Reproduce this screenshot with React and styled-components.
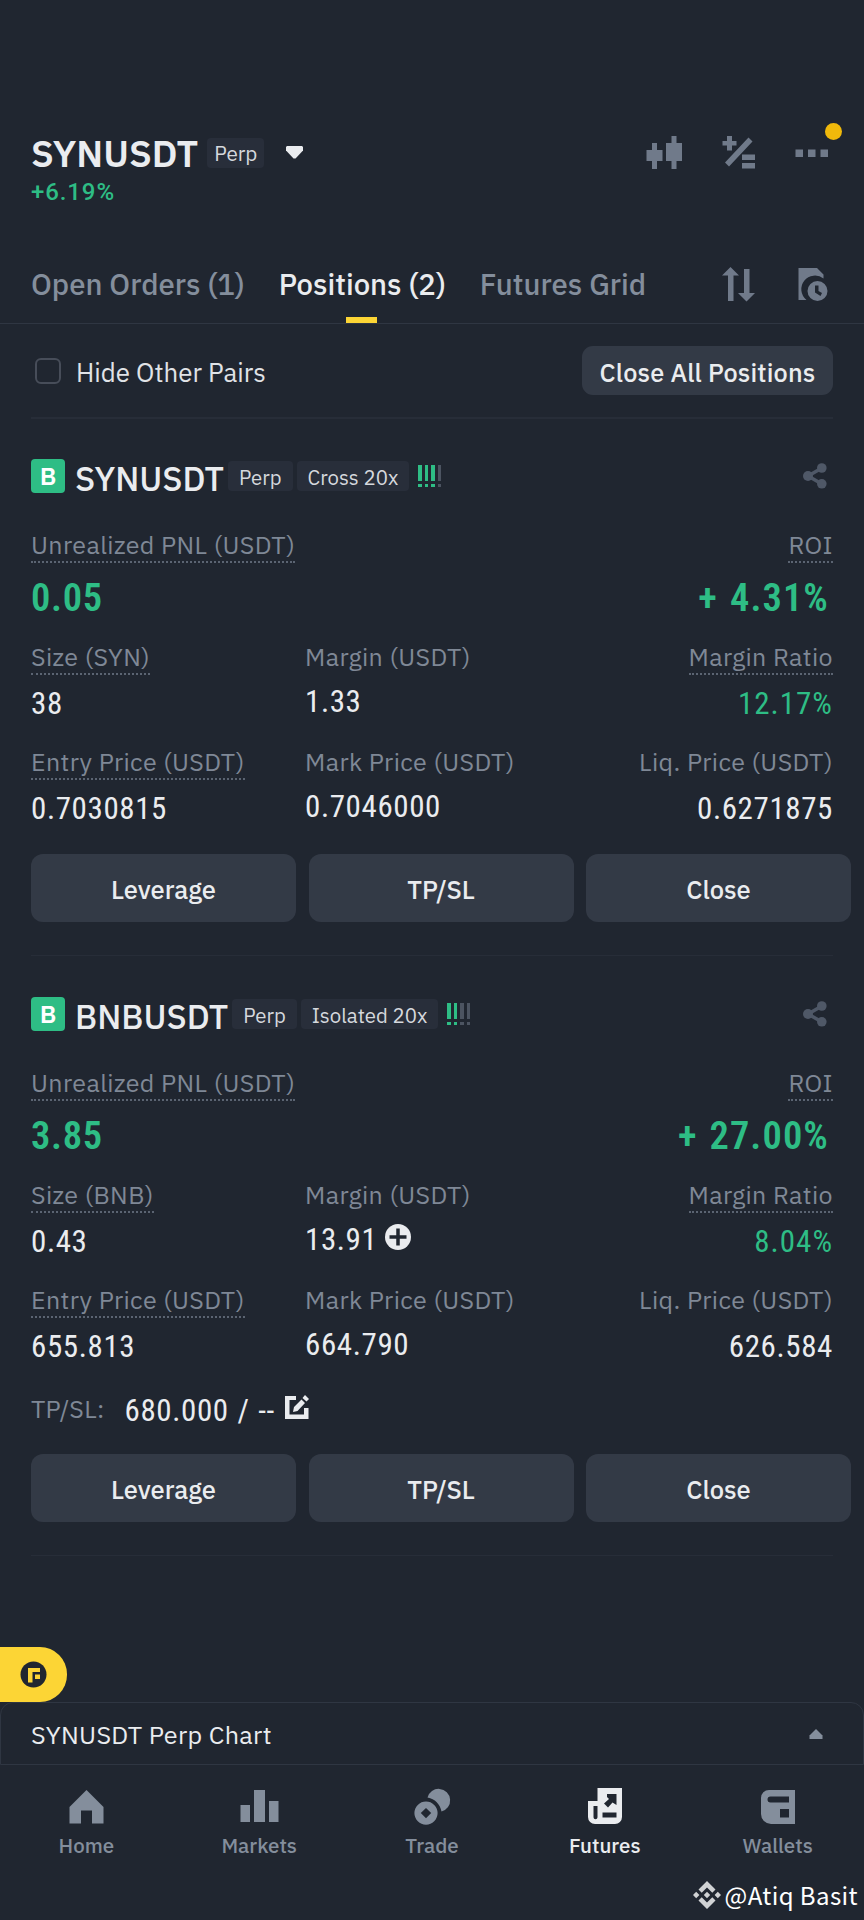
import React from 'react';
import styled, { createGlobalStyle } from 'styled-components';

const positions = [
    {
        symbol: 'SYNUSDT',
        coin: 'SYN',
        mode: 'Cross 20x',
        risk: 3,
        pnl: '0.05',
        roi: '+ 4.31%',
        size: '38',
        margin: '1.33',
        ratio: '12.17%',
        entry: '0.7030815',
        mark: '0.7046000',
        liq: '0.6271875',
    },
    {
        symbol: 'BNBUSDT',
        coin: 'BNB',
        mode: 'Isolated 20x',
        risk: 2,
        pnl: '3.85',
        roi: '+ 27.00%',
        size: '0.43',
        margin: '13.91',
        canAdd: true,
        ratio: '8.04%',
        entry: '655.813',
        mark: '664.790',
        liq: '626.584',
        tpsl: '680.000 / --',
    },
];

const App = () => {
    return (
        <Screen>
            <GlobalStyle />
            <Header>
                <div>
                    <PairRow>
                        <PairName>SYNUSDT</PairName>
                        <HeaderTag>Perp</HeaderTag>
                        <Caret width="17" height="13" viewBox="0 0 17 13">
                            <path d="M1 0h15l1 1v3.500L9.500 12.500h-2L0 4.500V1z" />
                        </Caret>
                    </PairRow>
                    <Change>+6.19%</Change>
                </div>
                <HeaderIcons>
                    <svg width="37" height="33" viewBox="0 0 37 33">
                        <path d="M6 7h5v7h5.500v11H11v8H6v-8H.5V14H6zM25.500 0h5v7H36v18h-5.500v8h-5v-8H20V7h5.500z" />
                    </svg>
                    <svg width="33" height="33" viewBox="0 0 33 33">
                        <path d="M5 0h5v5h4.500v4.500H10v5H5v-5H.5V5H5zM26.500 1.500l4 4L7 30.500l-4-4zM20 18.500h13V24H20zM20 27h13v5.500H20z" />
                    </svg>
                    <MoreIcon>
                        <svg width="33" height="8" viewBox="0 0 33 8">
                            <path d="M.5.5h7.500V8H.5zM13 .5h7.500V8H13zM25.500.5H33V8h-7.500z" />
                        </svg>
                        <Dot />
                    </MoreIcon>
                </HeaderIcons>
            </Header>

            <Tabs>
                <Tab>Open Orders (1)</Tab>
                <Tab $active>Positions (2)</Tab>
                <Tab>Futures Grid</Tab>
                <TabIcons>
                    <svg width="33" height="35" viewBox="0 0 33 35">
                        <path d="M8.500 0L17 8.500h-5.500V34H6V8.500H0zM22 2h5.500v24H33L24.500 34.500 16 26h6z" />
                    </svg>
                    <svg width="30" height="34" viewBox="0 0 30 34">
                        <path d="M.5 1h18.500l6.500 6.500V11.500A12.500 12.500 0 0 0 8.500 33H.5z" />
                        <path
                            fillRule="evenodd"
                            d="M19.500 14a10 10 0 1 0 0 20 10 10 0 0 0 0-20zm-2.500 4.500h3.500v5.500l3.500 2-1.500 3-5.500-3.500z"
                        />
                    </svg>
                </TabIcons>
            </Tabs>

            <FilterRow>
                <Checkbox />
                <FilterLabel>Hide Other Pairs</FilterLabel>
                <CloseAll>Close All Positions</CloseAll>
            </FilterRow>

            {positions.map((p) => (
                <Position key={p.symbol} data={p} />
            ))}

            <BottomArea>
                <Bonus>
                    <svg width="27" height="27" viewBox="0 0 27 27">
                        <circle cx="13.500" cy="13.500" r="13" fill="#202630" />
                        <path d="M8 7h12v4h-7.500v10.500H8zM15 13.500h5v4.500h-5z" fill="#fcd535" />
                    </svg>
                </Bonus>
                <ChartBar>
                    <span>SYNUSDT Perp Chart</span>
                    <svg width="14" height="10" viewBox="0 0 14 10">
                        <path d="M7 0l6.500 6.500V10H.5V6.500z" />
                    </svg>
                </ChartBar>
                <Nav />
                <Watermark>
                    <svg width="28" height="28" viewBox="0 0 28 28">
                        <path d="M14 0l8.500 8.500-3.200 3.200L14 6.400l-5.300 5.300-3.200-3.200zM14 28l8.500-8.500-3.200-3.200-5.300 5.300-5.300-5.300-3.200 3.200zM3.200 10.800L6.400 14l-3.200 3.200L0 14zM24.800 10.800L28 14l-3.200 3.200-3.200-3.200zM14 10.800l3.200 3.200-3.200 3.200-3.200-3.200z" />
                    </svg>
                    <span>@Atiq Basit</span>
                </Watermark>
            </BottomArea>
        </Screen>
    );
};

export default App;

const Position = ({ data }) => {
    return (
        <Card>
            <CardHead>
                <Side>B</Side>
                <Symbol>{data.symbol}</Symbol>
                <Tag>Perp</Tag>
                <Tag>{data.mode}</Tag>
                <Risk>
                    {[0, 1, 2, 3].map((i) => (
                        <RiskBar key={i} $on={i < data.risk} />
                    ))}
                </Risk>
                <ShareIcon width="24" height="26" viewBox="0 0 24 26">
                    <path d="M19 5L5 13l14 8" fill="none" strokeWidth="3.500" />
                    <circle cx="18.800" cy="5" r="4.800" />
                    <circle cx="5" cy="13" r="5" />
                    <circle cx="18.800" cy="20.800" r="4.800" />
                </ShareIcon>
            </CardHead>

            <Between>
                <Stat>
                    <Label $dotted>Unrealized PNL (USDT)</Label>
                    <BigValue>{data.pnl}</BigValue>
                </Stat>
                <Stat $right>
                    <Label $dotted>ROI</Label>
                    <BigValue $inset>{data.roi}</BigValue>
                </Stat>
            </Between>

            <Stats>
                <Stat>
                    <Label $dotted>Size ({data.coin})</Label>
                    <Value>{data.size}</Value>
                </Stat>
                <Stat>
                    <Label>Margin (USDT)</Label>
                    <Value $plain>
                        <span>{data.margin}</span>
                        {data.canAdd && (
                            <AddIcon width="26" height="26" viewBox="0 0 26 26">
                                <circle cx="13" cy="13" r="13" fill="#eaecef" />
                                <path d="M13 4.500v17M4.500 13h17" stroke="#202630" strokeWidth="3.500" />
                            </AddIcon>
                        )}
                    </Value>
                </Stat>
                <Stat $right>
                    <Label $dotted>Margin Ratio</Label>
                    <Value $up>{data.ratio}</Value>
                </Stat>
                <Stat>
                    <Label $dotted>Entry Price (USDT)</Label>
                    <Value>{data.entry}</Value>
                </Stat>
                <Stat>
                    <Label>Mark Price (USDT)</Label>
                    <Value $plain>{data.mark}</Value>
                </Stat>
                <Stat $right>
                    <Label>Liq. Price (USDT)</Label>
                    <Value>{data.liq}</Value>
                </Stat>
            </Stats>

            {data.tpsl && (
                <TpslRow>
                    <TpslLabel>TP/SL:</TpslLabel>
                    <TpslValue>{data.tpsl}</TpslValue>
                    <EditIcon width="24" height="24" viewBox="0 0 24 24">
                        <path d="M0 1h11v4H4.500v14.500H19V13h4.500v11H0z" />
                        <path d="M16.500 4.500l3.500 3.500-7.500 8L8 17l1-5zM20 0l4 4-2.500 2.500L17.500 3z" />
                    </EditIcon>
                </TpslRow>
            )}

            <Actions $tight={!!data.tpsl}>
                <Action>Leverage</Action>
                <Action>TP/SL</Action>
                <Action>Close</Action>
            </Actions>
        </Card>
    );
};

const Nav = () => {
    return (
        <NavBar>
            <NavItem>
                <svg width="36" height="36" viewBox="0 0 36 36">
                    <path d="M18.500 1l17 17v16.500H24V21.500H13v13H1.500V18z" />
                </svg>
                <span>Home</span>
            </NavItem>
            <NavItem>
                <svg width="38" height="36" viewBox="0 0 38 36">
                    <path d="M.5 16H10v17H.5zM14 1h11v32H14zM29 12h9.500v21H29z" />
                </svg>
                <span>Markets</span>
            </NavItem>
            <NavItem>
                <svg width="38" height="36" viewBox="0 0 38 36">
                    <path d="M14.500 8.500A11.500 11.500 0 1 1 28.500 22.500C27 15 22 10 14.500 8.500z" />
                    <path
                        fillRule="evenodd"
                        d="M13 12.500a11.600 11.600 0 1 0 0 23.200 11.600 11.600 0 0 0 0-23.200zm0 6.400l5.200 5.200-5.200 5.200-5.200-5.200z"
                    />
                </svg>
                <span>Trade</span>
            </NavItem>
            <NavItem $active>
                <svg width="36" height="36" viewBox="0 0 36 36">
                    <path
                        fillRule="evenodd"
                        d="M10.500-1H35v29a7 7 0 0 1-7 7H8a7 7 0 0 1-7-7V12h9.500zM6.500 17v11c0 3 4 3 4 0V17zM20 5v3l2 2-5 4.500 4 4 4.500-5 4 2.500V5zM15.500 23.500v5h14v-5z"
                    />
                </svg>
                <span>Futures</span>
            </NavItem>
            <NavItem>
                <svg width="36" height="36" viewBox="0 0 36 36">
                    <path
                        fillRule="evenodd"
                        d="M9 1h26v34H11A10 10 0 0 1 1 25V9a8 8 0 0 1 8-8zm1.500 6.500a3 3 0 0 0 0 6H29v-6zM20 20v8.500h9V20z"
                    />
                </svg>
                <span>Wallets</span>
            </NavItem>
        </NavBar>
    );
};

const textFont = `'IBM Plex Sans', Roboto, 'Noto Sans', sans-serif`;
const numFont = `Roboto, 'Liberation Sans', sans-serif`;

const GlobalStyle = createGlobalStyle`
* {
    box-sizing: border-box;
}

body {
    margin: 0;
    background: #202630;
    color: #eaecef;
    font-family: ${textFont};
}

svg {
    display: block;
    flex-shrink: 0;
    overflow: visible;
}

button {
    border: none;
    padding: 0;
    color: inherit;
    font-family: inherit;
}
`;

const Screen = styled.div`
width: 864px;
height: 1920px;
padding-top: 128px;
display: flex;
flex-direction: column;
overflow: hidden;
`;

const Header = styled.header`
height: 117px;
flex-shrink: 0;
padding: 0 31px;
display: flex;
justify-content: space-between;
`;

const PairRow = styled.div`
height: 50px;
display: flex;
align-items: center;
`;

const PairName = styled.span`
font-size: 37.4px;
font-weight: 600;
line-height: 49px;
`;

const HeaderTag = styled.span`
height: 30px;
margin-left: 9px;
padding: 0 7px;
border-radius: 4px;
background: #282e3a;
color: #d5d8dd;
font-size: 20.7px;
line-height: 32px;
`;

const Caret = styled.svg`
margin: -2px 0 0 22px;
fill: #eaecef;
`;

const Change = styled.span`
display: block;
height: 26px;
color: #2ebd85;
font-family: ${numFont};
font-size: 24px;
font-weight: 500;
line-height: 28px;
letter-spacing: 0.9px;
`;

const HeaderIcons = styled.div`
height: 49px;
padding-right: 5px;
display: flex;
align-items: center;
gap: 39px;
fill: #707a8a;
`;

const MoreIcon = styled.div`
position: relative;
margin-left: 1px;
`;

const Dot = styled.i`
position: absolute;
top: -26px;
right: -14px;
width: 17px;
height: 17px;
border-radius: 50%;
background: #f0b90b;
`;

const Tabs = styled.nav`
height: 79px;
flex-shrink: 0;
padding: 0 36px 0 31px;
display: flex;
gap: 34px;
border-bottom: 1px solid #2f3642;
`;

const Tab = styled.span`
position: relative;
height: 78px;
color: ${(props) => (props.$active ? '#eaecef' : '#848e9c')};
font-size: 29.3px;
font-weight: 500;
line-height: 79px;
white-space: nowrap;

&::after {
    content: '';
    display: ${(props) => (props.$active ? 'block' : 'none')};
    position: absolute;
    left: 50%;
    bottom: 0;
    width: 31px;
    height: 6px;
    margin-left: -16px;
    background: #fcd535;
}
`;

const TabIcons = styled.div`
margin-left: auto;
display: flex;
align-items: center;
gap: 43px;
fill: #707a8a;
`;

const FilterRow = styled.div`
height: 95px;
flex-shrink: 0;
margin: 0 31px;
padding-left: 4px;
display: flex;
align-items: center;
border-bottom: 2px solid #272d38;
`;

const Checkbox = styled.span`
width: 26px;
height: 26px;
border: 2px solid #474d59;
border-radius: 6px;
`;

const FilterLabel = styled.span`
margin-left: 15px;
padding-top: 3px;
color: #e0e3e7;
font-size: 25.9px;
`;

const CloseAll = styled.button`
width: 251px;
height: 49px;
margin-left: auto;
padding-top: 4px;
border-radius: 11px;
background: #333a46;
font-size: 25.3px;
font-weight: 500;
letter-spacing: 0.15px;
`;

const Card = styled.section`
flex-shrink: 0;
margin: 0 31px;
padding: 40px 0 33px;
border-bottom: 1px solid #272d38;

& + & {
    padding-top: 41px;
}
`;

const CardHead = styled.div`
height: 34px;
margin-bottom: 36px;
display: flex;
align-items: center;
`;

const Side = styled.span`
width: 34px;
height: 34px;
border-radius: 4px;
background: #2ebd85;
color: #fff;
font-size: 25px;
font-weight: 600;
line-height: 34px;
text-align: center;
`;

const Symbol = styled.span`
margin: 4px 4px 0 10px;
font-size: 33.7px;
font-weight: 500;
line-height: 34px;
`;

const Tag = styled.span`
height: 30px;
margin-right: 4px;
padding: 0 11px;
border-radius: 4px;
background: #282e3a;
color: #d5d8dd;
font-size: 20.4px;
line-height: 33px;
white-space: nowrap;
`;

const Risk = styled.div`
margin-left: 5px;
display: flex;
gap: 3px;
`;

const RiskBar = styled.i`
width: 3.5px;
height: 22px;
background: ${(props) => {
        const color = props.$on ? '#2ebd85' : '#4c5461';
        return `linear-gradient(${color} 0 16px, transparent 16px 19px, ${color} 19px)`;
    }};
`;

const ShareIcon = styled.svg`
margin: -1px 6px 0 auto;
fill: #4f5867;

path {
    stroke: #4f5867;
}
`;

const Between = styled.div`
margin-bottom: 22px;
display: flex;
justify-content: space-between;
`;

const Stats = styled.div`
display: grid;
grid-template-columns: 274px 1fr auto;
row-gap: 28px;
`;

const Stat = styled.div`
display: flex;
flex-direction: column;
align-items: ${(props) => (props.$right ? 'flex-end' : 'flex-start')};
`;

const Label = styled.span`
height: 34px;
border-bottom: 2px ${(props) => (props.$dotted ? 'dotted #5b6472' : 'solid transparent')};
color: #7f8896;
font-size: 25px;
line-height: 32px;
letter-spacing: 0.38px;
white-space: nowrap;
`;

const BigValue = styled.span`
height: 44px;
margin: 12px ${(props) => (props.$inset ? '4px' : '0')} 0 0;
color: #2ebd85;
font-family: ${numFont};
font-size: 38.5px;
font-stretch: ${(props) => (props.$inset ? '84%' : '80%')};
font-weight: 600;
line-height: 46px;
letter-spacing: ${(props) => (props.$inset ? '1.1px' : '0.7px')};
word-spacing: 2px;
`;

const Value = styled.span`
height: 30px;
margin-top: ${(props) => (props.$plain ? '11px' : '13px')};
display: flex;
align-items: center;
gap: 8px;
color: ${(props) => (props.$up ? '#2ebd85' : '#eaecef')};
font-family: ${numFont};
font-size: 31px;
font-stretch: 80%;
line-height: 31px;
letter-spacing: ${(props) => (props.$up ? '1px' : '0.6px')};
`;

const AddIcon = styled.svg`
margin-top: -5px;
`;

const TpslRow = styled.div`
height: 30px;
margin-top: 33px;
display: flex;
align-items: center;
`;

const TpslLabel = styled.span`
color: #7f8896;
font-size: 25px;
line-height: 30px;
letter-spacing: 0.3px;
`;

const TpslValue = styled(Value)`
margin: 2px 10px 0 20px;
word-spacing: 1px;
`;

const EditIcon = styled.svg`
margin-top: -4px;
fill: #eaecef;
`;

const Actions = styled.div`
margin-top: ${(props) => (props.$tight ? '30px' : '31px')};
display: flex;
gap: 12.5px;
`;

const Action = styled.button`
flex: 0 0 265px;
height: 68px;
padding-top: 3px;
border-radius: 12px;
background: #333a46;
font-size: 25.5px;
font-weight: 500;
`;

const BottomArea = styled.footer`
margin-top: auto;
flex-shrink: 0;
height: 273px;
display: flex;
flex-direction: column;
`;

const Bonus = styled.div`
width: 67px;
height: 55px;
padding-left: 20px;
display: flex;
align-items: center;
border-radius: 0 27px 27px 0;
background: #fcd535;
`;

const ChartBar = styled.div`
height: 63px;
padding: 0 40px 0 30px;
display: flex;
align-items: center;
justify-content: space-between;
border: 1px solid #2f3642;
border-radius: 13px 13px 0 0;
font-size: 25.2px;
letter-spacing: 0.3px;
fill: #848e9c;

span {
    padding-top: 1px;
}
`;

const NavBar = styled.nav`
display: grid;
grid-template-columns: repeat(5, 1fr);
padding-top: 24px;
`;

const NavItem = styled.div`
display: flex;
flex-direction: column;
align-items: center;
color: ${(props) => (props.$active ? '#eaecef' : '#848e9c')};
fill: currentColor;
font-size: 20.5px;
font-weight: 500;
line-height: 26px;

span {
    margin-top: 8px;
}
`;

const Watermark = styled.div`
margin-top: 22px;
padding-right: 6px;
display: flex;
justify-content: flex-end;
align-items: center;
gap: 4px;
color: #fff;
fill: #d0d2d4;
font-family: 'Noto Sans CJK SC', 'Noto Sans', sans-serif;
font-size: 24px;
line-height: 28px;
letter-spacing: 0.4px;
`;
